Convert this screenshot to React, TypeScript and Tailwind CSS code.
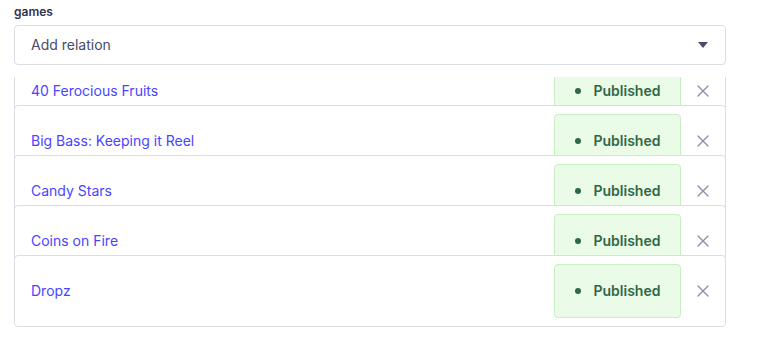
const games = [
  "40 Ferocious Fruits",
  "Big Bass: Keeping it Reel",
  "Candy Stars",
  "Coins on Fire",
  "Dropz",
];

function CloseIcon() {
  return (
    <svg width="12" height="12" viewBox="0 0 12 12" fill="none" className="shrink-0">
      <path d="M1 1l10 10M11 1L1 11" stroke="#8e8ea9" strokeWidth="1.4" strokeLinecap="round" />
    </svg>
  );
}

function Row({ name }: { name: string }) {
  return (
    <div className="relative mt-[-22px] flex h-[72px] items-center justify-between rounded-[4px] border border-[#dcdce4] bg-white pl-4 pr-4">
      <span className="text-[14px] leading-5 text-[#4945ff]">{name}</span>
      <div className="flex items-center gap-4">
        <div className="flex h-[54px] w-[127px] items-center justify-center gap-[13px] rounded-[4px] border border-[#c6f0c2] bg-[#eafbe7]">
          <span className="h-[6px] w-[6px] rounded-full bg-[#2f6846]" />
          <span className="text-[14px] font-semibold leading-5 text-[#2f6846]">Published</span>
        </div>
        <CloseIcon />
      </div>
    </div>
  );
}

export default function App() {
  return (
    <div
      className="w-[781px] h-[351px] bg-white pl-[14px] pt-1"
      style={{ fontFamily: "Inter, 'Noto Sans', sans-serif" }}
    >
      <div className="w-[712px]">
        <div className="text-[12px] font-semibold leading-4 text-[#32324d]">games</div>
        <div className="mt-[5px] flex h-10 items-center justify-between rounded-[4px] border border-[#dcdce4] bg-white pl-4 pr-[17px]">
          <span className="text-[14px] leading-5 text-[#4a4a6a]">Add relation</span>
          <svg width="10" height="6" viewBox="0 0 10 6">
            <path d="M0 0h10L5 6z" fill="#4a4a6a" />
          </svg>
        </div>
        <div className="mt-3 overflow-hidden">
          {games.map((g) => (
            <Row key={g} name={g} />
          ))}
        </div>
      </div>
    </div>
  );
}
